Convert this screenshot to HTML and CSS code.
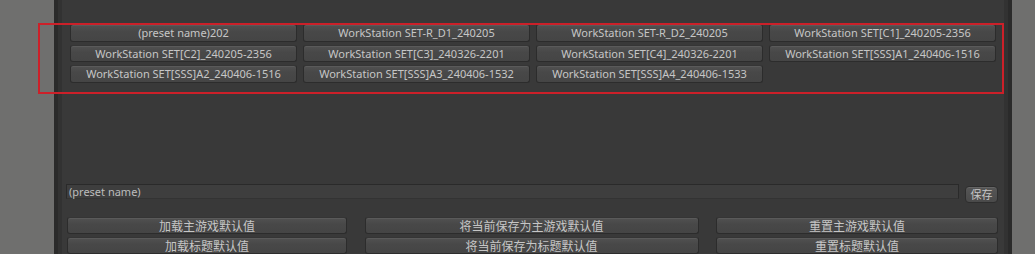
FILE: index.html
```html
<!DOCTYPE html>
<html lang="zh">
<head>
<meta charset="utf-8">
<title>Presets</title>
<link rel="stylesheet" href="styles.css">
</head>
<body>
<div class="panel">
  <div class="inner">
    <div class="presets">
      <button class="btn">(preset name)202</button>
      <button class="btn">WorkStation SET-R_D1_240205</button>
      <button class="btn">WorkStation SET-R_D2_240205</button>
      <button class="btn">WorkStation SET[C1]_240205-2356</button>
      <button class="btn">WorkStation SET[C2]_240205-2356</button>
      <button class="btn">WorkStation SET[C3]_240326-2201</button>
      <button class="btn">WorkStation SET[C4]_240326-2201</button>
      <button class="btn">WorkStation SET[SSS]A1_240406-1516</button>
      <button class="btn">WorkStation SET[SSS]A2_240406-1516</button>
      <button class="btn">WorkStation SET[SSS]A3_240406-1532</button>
      <button class="btn">WorkStation SET[SSS]A4_240406-1533</button>
    </div>
    <div class="name-row">
      <div class="field">(preset name)</div>
      <button class="btn save">保存</button>
    </div>
    <div class="defaults">
      <button class="btn cjk">加载主游戏默认值</button>
      <button class="btn cjk">将当前保存为主游戏默认值</button>
      <button class="btn cjk">重置主游戏默认值</button>
      <button class="btn cjk">加载标题默认值</button>
      <button class="btn cjk">将当前保存为标题默认值</button>
      <button class="btn cjk">重置标题默认值</button>
    </div>
  </div>
</div>
<div class="highlight"></div>
</body>
</html>
```
FILE: styles.css
```css
html, body {
  margin: 0;
  padding: 0;
  width: 1035px;
  height: 254px;
  overflow: hidden;
}
body {
  background: #6f6f6e;
  font-family: "Noto Sans", "Noto Sans CJK SC", sans-serif;
  font-size: 11px;
  color: #c4c4c4;
  position: relative;
}
.panel {
  margin-left: 54px;
  width: 958px;
  height: 254px;
  box-sizing: border-box;
  background: #2b2b2b;
  border-left: 4px solid #2a2a2a;
  border-right: 4px solid #2a2a2a;
}
.inner {
  height: 100%;
  box-sizing: border-box;
  background: #393939;
  border-left: 4px solid #323232;
  border-right: 4px solid #323232;
}
.btn {
  display: block;
  margin: 0;
  padding: 0;
  box-sizing: border-box;
  border: 1px solid #2c2c2c;
  border-top-color: #353535;
  border-radius: 3px;
  background: linear-gradient(#515151, #484848 40%, #454545);
  box-shadow: inset 0 1px 0 #5a5a5a;
  color: #c6c6c6;
  font-family: "Noto Sans", "Noto Sans CJK SC", sans-serif;
  font-size: 11px;
  line-height: 15px;
  text-align: center;
  white-space: nowrap;
  overflow: hidden;
}
.presets {
  display: grid;
  grid-template-columns: repeat(4, 1fr);
  grid-auto-rows: 17.5px;
  column-gap: 6px;
  row-gap: 3px;
  padding: 24px 8px 0;
}
.name-row {
  display: flex;
  align-items: flex-start;
  gap: 6px;
  margin-top: 101px;
  padding: 0 6px 0 4px;
}
.field {
  flex: 1;
  height: 15px;
  box-sizing: border-box;
  background: #3e3e3e;
  border: 1px solid #2a2a2a;
  border-bottom-color: #333333;
  padding-left: 2px;
  color: #bcbcbc;
  line-height: 13px;
}
.save {
  width: 33px;
  height: 17px;
  margin-top: 2px;
  border-radius: 4px;
  border-color: #2e2e2e;
  box-shadow: inset 0 1px 0 #646464;
  background: linear-gradient(#565656, #4a4a4a);
  font-size: 11px;
}
.defaults {
  display: grid;
  grid-template-columns: 280px 334px 282px;
  grid-auto-rows: 17px;
  column-gap: 17.5px;
  row-gap: 3px;
  margin-top: 14px;
  padding: 0 6px 0 5px;
}
.cjk {
  font-size: 12px;
  line-height: 15px;
  font-family: "Noto Sans CJK SC", "Noto Sans", sans-serif;
}
.highlight {
  position: absolute;
  left: 38px;
  top: 23px;
  width: 966px;
  height: 71px;
  box-sizing: border-box;
  border: 2px solid #cc2029;
  pointer-events: none;
}
```
